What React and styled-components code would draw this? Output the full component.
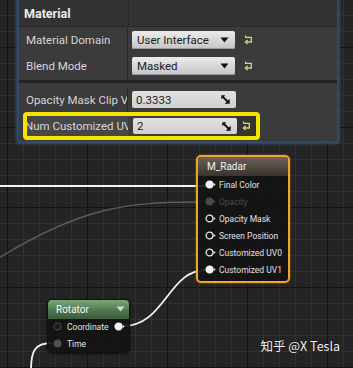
import React from "react";
import styled, { createGlobalStyle } from "styled-components";

const GlobalStyle = createGlobalStyle`
  html, body {
    margin: 0;
    padding: 0;
    background: #242424;
    overflow: hidden;
  }
  * {
    box-sizing: border-box;
  }
`;

const materialRows = [
  { label: "Material Domain", value: "User Interface" },
  { label: "Blend Mode", value: "Masked" },
];

const radarPins = [
  { label: "Final Color", kind: "filled" },
  { label: "Opacity", kind: "disabled" },
  { label: "Opacity Mask", kind: "open" },
  { label: "Screen Position", kind: "open" },
  { label: "Customized UV0", kind: "open" },
  { label: "Customized UV1", kind: "filled" },
];

export default function App() {
  return (
    <>
      <GlobalStyle />
      <Canvas>
        <Wires width="353" height="368" viewBox="0 0 353 368">
          <path d="M -20 270 C 80 204 130 202 203 202" stroke="#5c5c5c" strokeWidth="1.4" fill="none" />
          <path d="M 0 186 L 206 186" stroke="#f2f2f2" strokeWidth="2" fill="none" />
          <path d="M 123 326 C 165 326 168 270 206 270" stroke="#f2f2f2" strokeWidth="1.8" fill="none" />
          <path d="M 52 343 C 34 343 31 352 31 370" stroke="#f2f2f2" strokeWidth="1.8" fill="none" />
        </Wires>

        <Panel>
          <PanelHeader>
            <HeaderTitle>Material</HeaderTitle>
            <span />
          </PanelHeader>
          <Section>
            {materialRows.map(row => (
              <Row key={row.label}>
                <Label>{row.label}</Label>
                <ValueCell>
                  <Dropdown>
                    <span>{row.value}</span>
                    <Caret />
                  </Dropdown>
                  <ResetIcon />
                </ValueCell>
              </Row>
            ))}
          </Section>
          <Separator />
          <Section $bottom>
            <Row $h={25}>
              <Label>Opacity Mask Clip Value</Label>
              <ValueCell>
                <NumberField>
                  <span>0.3333</span>
                  <SpinIcon />
                </NumberField>
              </ValueCell>
            </Row>
            <HighlightRow>
              <HighlightFrame>
                <HighlightLabel>Num Customized UVs</HighlightLabel>
                <NumberField $wide>
                  <span>2</span>
                  <SpinIcon />
                </NumberField>
                <ResetSlot>
                  <ResetIcon />
                </ResetSlot>
              </HighlightFrame>
            </HighlightRow>
          </Section>
        </Panel>

        <Node $left={196} $top={155} $width={94} $accent>
          <NodeHeader $tone="material">M_Radar</NodeHeader>
          <NodeBody>
            {radarPins.map(pin => (
              <PinRow key={pin.label} $disabled={pin.kind === "disabled"}>
                <Pin kind={pin.kind} />
                <span>{pin.label}</span>
              </PinRow>
            ))}
          </NodeBody>
        </Node>

        <Node $left={47} $top={299} $width={83}>
          <NodeHeader $tone="function">
            <span>Rotator</span>
            <HeaderCaret />
          </NodeHeader>
          <NodeBody $compact>
            <PinRow>
              <Pin kind="dark" />
              <span>Coordinate</span>
              <OutPin>
                <Pin kind="filled" />
              </OutPin>
            </PinRow>
            <PinRow>
              <Pin kind="grey" />
              <span>Time</span>
            </PinRow>
          </NodeBody>
        </Node>

        <Watermark>知乎 @X Tesla</Watermark>
      </Canvas>
    </>
  );
}

function Caret() {
  return (
    <svg width="9" height="6" viewBox="0 0 9 6">
      <path d="M0.5 0.5 H8.5 L4.5 5.5 Z" fill="#111" />
    </svg>
  );
}

function HeaderCaret() {
  return (
    <svg width="9" height="6" viewBox="0 0 9 6">
      <path d="M0.5 0.5 H8.5 L4.5 5.5 Z" fill="#cfd8cf" />
    </svg>
  );
}

function ResetIcon() {
  return (
    <ResetSvg width="9" height="10" viewBox="0 0 9 10">
      <path d="M1.6 0.5 V2.4 H7.3 V7 H2.4" stroke="#d8d66c" strokeWidth="1.3" fill="none" />
      <path d="M3.6 5 L1.4 7 L3.6 9" stroke="#d8d66c" strokeWidth="1.3" fill="none" />
    </ResetSvg>
  );
}

function SpinIcon() {
  return (
    <svg width="9" height="9" viewBox="0 0 9 9">
      <path d="M1.5 1.5 L7.5 7.5" stroke="#111" strokeWidth="1.8" />
      <path d="M0.3 0.3 H4.3 L0.3 4.3 Z" fill="#111" />
      <path d="M8.7 8.7 H3.7 L8.7 3.7 Z" fill="#111" />
    </svg>
  );
}

function Pin({ kind }) {
  const styles = {
    filled: { fill: "#f4f4f4", stroke: "#f4f4f4", arrow: "#f4f4f4" },
    open: { fill: "none", stroke: "#e8e8e8", arrow: "#e8e8e8" },
    disabled: { fill: "#4a4a4a", stroke: "#4a4a4a", arrow: "#4a4a4a" },
    dark: { fill: "#1c1c1c", stroke: "#3e3e3e", arrow: "none" },
    grey: { fill: "#4e4e4e", stroke: "#4e4e4e", arrow: "none" },
  }[kind];
  return (
    <svg width="11" height="9" viewBox="0 0 11 9">
      <circle cx="4.5" cy="4.5" r="3.4" fill={styles.fill} stroke={styles.stroke} strokeWidth="1.3" />
      <path d="M8.6 2.8 L10.6 4.5 L8.6 6.2 Z" fill={styles.arrow} />
    </svg>
  );
}

const Canvas = styled.div`
  position: relative;
  width: 353px;
  height: 368px;
  overflow: hidden;
  background-color: #242424;
  background-image:
    linear-gradient(to right, #131313 1px, transparent 1px),
    linear-gradient(to bottom, #131313 1px, transparent 1px),
    linear-gradient(to right, #313131 1px, transparent 1px),
    linear-gradient(to bottom, #313131 1px, transparent 1px);
  background-size: 80px 80px, 80px 80px, 16px 16px, 16px 16px;
  background-position: 7px 0, 0 47px, 7px 0, 0 15px;
  font-family: Roboto, "Liberation Sans", sans-serif;
`;

const Wires = styled.svg`
  position: absolute;
  inset: 0;
`;

const Panel = styled.div`
  position: absolute;
  left: 17px;
  top: 0;
  width: 322px;
  background: #3a3a3a;
  border: 2px solid #2f4968;
  border-top: none;
  border-radius: 0 0 3px 3px;
  box-shadow: 0 0 3px 1px rgba(70, 110, 160, 0.55);
`;

const PanelHeader = styled.div`
  display: grid;
  grid-template-columns: 109px 1fr;
  height: 27px;
  background: #323232;
  border-bottom: 1px solid #2a2a2a;
  > span {
    border-left: 1px solid #292929;
  }
`;

const HeaderTitle = styled.div`
  display: flex;
  align-items: center;
  padding-left: 5px;
  font-size: 12.5px;
  font-weight: 700;
  color: #ececec;
`;

const Section = styled.div`
  display: flex;
  flex-direction: column;
  padding: ${p => (p.$bottom ? "4px 0 1px" : "0 0 1px")};
  background: #3b3b3b;
`;

const Separator = styled.div`
  height: 3px;
  background: #232323;
`;

const Row = styled.div`
  display: grid;
  grid-template-columns: 109px 1fr;
  height: ${p => p.$h || 26}px;
`;

const Label = styled.div`
  display: flex;
  align-items: center;
  padding-left: 7px;
  font-size: 11.5px;
  color: #d6d6d6;
  white-space: nowrap;
  overflow: hidden;
  border-right: 1px solid #2a2a2a;
`;

const ValueCell = styled.div`
  display: flex;
  align-items: center;
  gap: 9px;
  padding-left: 4px;
`;

const Dropdown = styled.div`
  display: flex;
  align-items: center;
  justify-content: space-between;
  width: 103px;
  height: 18px;
  padding: 0 6px 0 5px;
  border-radius: 2px;
  background: linear-gradient(to bottom, #ececec, #c4c4c4);
  box-shadow: inset 0 -1px 0 #9a9a9a;
  font-size: 11.5px;
  color: #1b1b1b;
`;

const ResetSvg = styled.svg`
  flex: none;
`;

const NumberField = styled.div`
  display: flex;
  align-items: center;
  justify-content: space-between;
  width: 104px;
  height: ${p => (p.$wide ? 16 : 17)}px;
  padding: 0 6px 0 4px;
  border-radius: 2px;
  background: linear-gradient(to bottom, #e2e2e2, #d0d0d0);
  font-size: 11.5px;
  color: #1b1b1b;
`;

const HighlightRow = styled.div`
  display: flex;
  height: 28px;
  padding-left: 4px;
`;

const HighlightFrame = styled.div`
  display: flex;
  align-items: center;
  width: 237px;
  height: 28px;
  border: 4px solid #f3e500;
  border-radius: 4px;
  background: #3e3e3e;
`;

const HighlightLabel = styled.div`
  display: flex;
  align-items: center;
  align-self: stretch;
  width: 101px;
  margin-right: 5px;
  text-indent: -2px;
  font-size: 11.5px;
  color: #d6d6d6;
  white-space: nowrap;
  overflow: hidden;
  background: #474747;
`;

const ResetSlot = styled.div`
  display: flex;
  align-items: center;
  justify-content: center;
  align-self: stretch;
  flex: 1;
  background: #333;
`;

const Node = styled.div`
  position: absolute;
  left: ${p => p.$left}px;
  top: ${p => p.$top}px;
  width: ${p => p.$width}px;
  border-radius: 5px;
  background: rgba(20, 20, 20, 0.92);
  border: ${p => (p.$accent ? "2px solid #f0a52c" : "1px solid #101010")};
  box-shadow: ${p => (p.$accent ? "0 0 2px #a86a10" : "0 1px 3px rgba(0,0,0,0.6)")};
  overflow: hidden;
`;

const NodeHeader = styled.div`
  display: flex;
  align-items: center;
  justify-content: space-between;
  height: 19px;
  padding: 0 4px 1px ${p => (p.$tone === "function" ? 8 : 9)}px;
  font-size: 10px;
  color: #f4f4f4;
  background: ${p =>
    p.$tone === "function"
      ? "linear-gradient(to bottom, #78a878, #4d744d 60%, #3c5a3c)"
      : "linear-gradient(to bottom, #6c625a, #4c4640 60%, #38342f)"};
`;

const NodeBody = styled.div`
  display: flex;
  flex-direction: column;
  gap: 6px;
  padding: ${p => (p.$compact ? "2px 0 3px 5px" : "3px 0 6px 7px")};
`;

const PinRow = styled.div`
  display: flex;
  align-items: center;
  gap: 3px;
  height: 11px;
  font-size: 8.5px;
  color: ${p => (p.$disabled ? "#4a4a4a" : "#e2e2e2")};
  white-space: nowrap;
`;

const OutPin = styled.div`
  display: flex;
  margin-left: auto;
  margin-right: 4px;
`;

const Watermark = styled.div`
  position: absolute;
  right: 13px;
  bottom: 13px;
  font-family: "Noto Sans CJK SC", "Noto Sans", sans-serif;
  font-size: 12.5px;
  color: #f2f2f2;
  text-shadow: 0 0 2px rgba(0, 0, 0, 0.8);
`;
